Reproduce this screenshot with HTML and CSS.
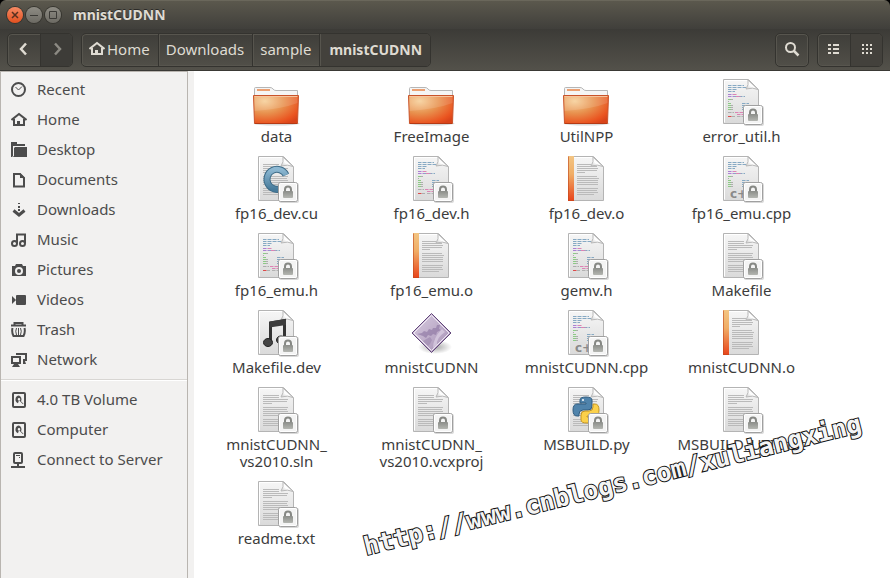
FILE: index.html
```html
<!DOCTYPE html>
<html lang="en">
<head>
    <meta charset="UTF-8">
    <meta name="viewport" content="width=device-width, initial-scale=1.0">
    <title>mnistCUDNN</title>
    <link rel="stylesheet" href="styles.css">
</head>
<body>
    <!-- Icon definitions -->
    <svg class="defs" width="0" height="0" aria-hidden="true">
        <defs>
            <linearGradient id="g-page" x1="0" y1="0" x2="0" y2="1">
                <stop offset="0" stop-color="#f6f6f6"/>
                <stop offset="1" stop-color="#dadada"/>
            </linearGradient>
            <linearGradient id="g-spine" x1="0" y1="0" x2="0" y2="1">
                <stop offset="0" stop-color="#f3c583"/>
                <stop offset="0.4" stop-color="#f0ad66"/>
                <stop offset="1" stop-color="#e8431a"/>
            </linearGradient>
            <linearGradient id="g-fold" x1="0" y1="1" x2="1" y2="0">
                <stop offset="0" stop-color="#c4c4c4"/>
                <stop offset="0.4" stop-color="#ffffff"/>
                <stop offset="1" stop-color="#e4e4e4"/>
            </linearGradient>
            <radialGradient id="g-folder" cx="0.25" cy="0.2" r="0.95">
                <stop offset="0" stop-color="#f6cf98"/>
                <stop offset="0.45" stop-color="#e8924f"/>
                <stop offset="0.85" stop-color="#ea5420"/>
                <stop offset="1" stop-color="#d9441a"/>
            </radialGradient>
            <linearGradient id="g-lock" x1="0" y1="0" x2="0" y2="1">
                <stop offset="0" stop-color="#8b8d89"/>
                <stop offset="1" stop-color="#b4b6b1"/>
            </linearGradient>
            <linearGradient id="g-diamond" x1="0" y1="0" x2="1" y2="1">
                <stop offset="0" stop-color="#d9cde0"/>
                <stop offset="1" stop-color="#a58fb5"/>
            </linearGradient>
            <linearGradient id="g-c" x1="0" y1="0" x2="0" y2="1">
                <stop offset="0" stop-color="#8db8d2"/>
                <stop offset="1" stop-color="#477b9b"/>
            </linearGradient>
            <radialGradient id="g-shadow">
                <stop offset="0" stop-color="#000" stop-opacity="0.35"/>
                <stop offset="1" stop-color="#000" stop-opacity="0"/>
            </radialGradient>
        </defs>

        <symbol id="page" viewBox="0 0 49 48">
            <path d="M6.500 1.500H31.500L41.500 11.500V45.500H6.500z" fill="url(#g-page)" stroke="#b4b4b4"/>
            <path d="M7.500 44.500V2.500H30" fill="none" stroke="#fff"/>
            <path d="M31 2L41 11.500Q36 9 29 11Q32 7 31 2z" fill="url(#g-fold)" stroke="#b8b8b8"/>
        </symbol>
        <symbol id="lock" viewBox="0 0 49 48">
            <rect x="27" y="28" width="20" height="20" rx="2" fill="#000" opacity="0.15"/>
            <rect x="26.500" y="27.500" width="19" height="19" rx="2" fill="#f4f4f4" stroke="#a0a0a0"/>
            <rect x="27.500" y="28.500" width="17" height="17" rx="1" fill="none" stroke="#fff"/>
            <path d="M33 37v-2.500a3 3 0 0 1 6 0V37" fill="none" stroke="#868884" stroke-width="2"/>
            <rect x="31" y="36" width="10" height="7" rx="1" fill="url(#g-lock)"/>
        </symbol>
        <symbol id="lines" viewBox="0 0 49 48">
            <path d="M11 9.500h16M11 11.500h16M11 13.500h25M11 15.500h24M11 17.500h9M11 21.500h25M11 23.500h24M11 25.500h25M11 27.500h24M11 29.500h21M11 33.500h25M11 35.500h24M11 37.500h25M11 39.500h20" stroke="#bababa"/>
        </symbol>
        <symbol id="code" viewBox="0 0 49 48">
            <g stroke-dasharray="3 0.500 1 0.500" fill="none">
                <path d="M11 7.500h16M11 9.500h18M11 11.500h9M11 13.500h7M17 18.500h11M25 25.500h7M25 27.500h7M25 29.500h7M25 31.500h7" stroke="#86a9c3"/>
                <path d="M11 16.500h5M11 18.500h6" stroke="#ad7fd4"/>
                <path d="M16 16.500h4M19 18.500h5M18 34.500h11M20 36.500h8" stroke="#dd83b4"/>
                <path d="M11 21.500h3M11 25.500h3M11 27.500h3M11 29.500h3M11 31.500h3" stroke="#8ccb84"/>
                <path d="M14 21.500h2M11 23.500h1M14 27.500h2M14 29.500h2M14 31.500h2M11 34.500h6M15 38.500h3" stroke="#adadad"/>
                <path d="M11 38.500h4" stroke="#dc4b4b"/>
                <path d="M20 38.500h9" stroke="#b2b2b2"/>
            </g>
        </symbol>

        <symbol id="f-folder" viewBox="0 0 49 48">
            <ellipse cx="24.500" cy="45.500" rx="23" ry="2" fill="#000" opacity="0.15"/>
            <path d="M2.500 19V10.500Q2.500 9.500 3.500 9.500H18Q20 9.500 21 11Q22 12.500 24 12.500H45.500V19z" fill="#f5f5f5" stroke="#b6b6b6"/>
            <rect x="5" y="11" width="13" height="2" fill="#eca072"/>
            <path d="M1.500 17.500H46.500L45.500 45.500H2.500z" fill="url(#g-folder)" stroke="#c9532a"/>
            <path d="M2.500 18.500H45.500V25Q30 31 2.500 33z" fill="#fff" opacity="0.13"/>
            <path d="M2.500 18.500H45.500" stroke="#f6c49c"/>
            <path d="M3 45.500H45" stroke="#b53a15"/>
        </symbol>
        <symbol id="f-header" viewBox="0 0 49 48">
            <use href="#page"/><use href="#code"/><use href="#lock"/>
        </symbol>
        <symbol id="f-text" viewBox="0 0 49 48">
            <use href="#page"/><use href="#lines"/><use href="#lock"/>
        </symbol>
        <symbol id="f-cpp" viewBox="0 0 49 48">
            <use href="#page"/><use href="#code"/>
            <path d="M11 33h17v8H11z" fill="#e0e0e0"/>
            <text x="13" y="43" class="cpp">c+</text>
            <use href="#lock"/>
        </symbol>
        <symbol id="f-cuda" viewBox="0 0 49 48">
            <use href="#page"/><use href="#lines"/>
            <path d="M34 20A10 10 0 1 0 30 33" fill="none" stroke="#3d6b87" stroke-width="7"/>
            <path d="M34 20A10 10 0 1 0 30 33" fill="none" stroke="url(#g-c)" stroke-width="5"/>
            <use href="#lock"/>
        </symbol>
        <symbol id="f-object" viewBox="0 0 49 48">
            <use href="#page"/>
            <path d="M6 1H12V46H6z" fill="url(#g-spine)"/>
            <path d="M6.500 1.500V45.500H12" fill="none" stroke="#c0481c" opacity="0.6"/>
            <path d="M15 9.500h14M15 11.500h20M15 13.500h21M15 15.500h20M15 17.500h8M15 21.500h20M15 23.500h22M15 25.500h21M15 27.500h21M15 29.500h21M15 33.500h21M15 35.500h20M15 37.500h21M15 39.500h17" stroke="#bababa"/>
        </symbol>
        <symbol id="f-audio" viewBox="0 0 49 48">
            <use href="#page"/>
            <path d="M18.500 33V14L32.500 11.500V29" fill="none" stroke="#333" stroke-width="3"/>
            <path d="M17.500 12.500L34 10V16L17.500 18.500z" fill="#3c3c3c"/>
            <ellipse cx="16" cy="33.500" rx="4.500" ry="4" fill="#444" stroke="#222"/>
            <ellipse cx="29" cy="31" rx="4.500" ry="4" fill="#444" stroke="#222"/>
            <use href="#lock"/>
        </symbol>
        <symbol id="f-exec" viewBox="0 0 49 48">
            <ellipse cx="28" cy="38" rx="17" ry="7" fill="url(#g-shadow)"/>
            <path d="M24.500 4.500L44 24L24.500 43.500L5 24z" fill="url(#g-diamond)" stroke="#62467a"/>
            <path d="M24.500 6.500L42 24L24.500 41.500L7 24z" fill="none" stroke="#efe8f3"/>
            <path d="M10 25l5-1 2-2 3 1 2-3 3 1 1-2 3 0 1-3 3 0-1 4 2 1-4 2-1 3-3-1-2 2-3-1-2 3-3-2z" fill="#8b73a0" opacity="0.6"/>
            <path d="M26 39q0-10 9-19l3 3q-9 6-8 13z" fill="#d7cbe0" opacity="0.8"/>
            <path d="M16 32l7-4 2 3-2 4-2 2z" fill="#9580a8" opacity="0.5"/>
        </symbol>
        <symbol id="f-python" viewBox="0 0 49 48">
            <use href="#page"/><use href="#lines"/>
            <path d="M18 16v-2q0-3 6-3t6 3v6q0 4-4 4h-5q-4 0-4 4v2h-2q-4 0-4-6t4-6h9v-1h-6z" fill="#4f83ab" stroke="#315d80"/>
            <path d="M31 18h2q4 0 4 6t-4 6h-8v1h6v3q0 3-6 3t-6-3v-5q0-4 4-4h4q4 0 4-4z" fill="#fbd14b" stroke="#c59520"/>
            <circle cx="21" cy="14" r="1" fill="#fff"/>
            <use href="#lock"/>
        </symbol>

        <symbol id="s-recent" viewBox="0 0 16 16">
            <circle cx="7.500" cy="7.500" r="6.500" fill="none" stroke="currentColor" stroke-width="2"/>
            <path d="M4.500 5l3 3 3.500-3.500" fill="none" stroke="currentColor" stroke-width="1"/>
        </symbol>
        <symbol id="s-home" viewBox="0 0 16 16">
            <path d="M0.500 8L8 2l7.500 6" fill="none" stroke="currentColor" stroke-width="2"/>
            <path d="M3 7v6h10V7" fill="none" stroke="currentColor" stroke-width="2"/>
            <path d="M6 9h3v5H6z" fill="currentColor"/>
        </symbol>
        <symbol id="s-desktop" viewBox="0 0 16 16">
            <path d="M0 0h6v2h8v2H2v10l-1 1H0z" fill="currentColor"/>
            <path d="M4 5h12v10H1.500L3 14V6z" fill="currentColor"/>
        </symbol>
        <symbol id="s-documents" viewBox="0 0 16 16">
            <path d="M3 2h6l4 4v8.500H3z" fill="none" stroke="currentColor" stroke-width="2"/>
            <path d="M9 1v5h5z" fill="currentColor"/>
        </symbol>
        <symbol id="s-downloads" viewBox="0 0 16 16">
            <path d="M7 1h2v1H7zM7 4h2v2H7zM7 7h2v2H7z" fill="currentColor"/>
            <path d="M2.500 8.500L8 13l5.500-4.500" fill="none" stroke="currentColor" stroke-width="3"/>
        </symbol>
        <symbol id="s-music" viewBox="0 0 16 16">
            <path d="M6 11V2.500h8V11" fill="none" stroke="currentColor" stroke-width="2"/>
            <circle cx="3.500" cy="11.500" r="2.500" fill="none" stroke="currentColor" stroke-width="2"/>
            <circle cx="11.500" cy="11.500" r="2.500" fill="none" stroke="currentColor" stroke-width="2"/>
        </symbol>
        <symbol id="s-pictures" viewBox="0 0 16 16">
            <path fill-rule="evenodd" d="M1 4h3l1-2h6l1 2h3v10H1zM8 5a4 4 0 1 0 0 8a4 4 0 1 0 0-8z" fill="currentColor"/>
            <circle cx="8" cy="9" r="2" fill="currentColor"/>
        </symbol>
        <symbol id="s-videos" viewBox="0 0 16 16">
            <path d="M1 4l4 4-4 4zM5 4q0-1 1-1h8q1 0 1 1v8q0 1-1 1H6q-1 0-1-1z" fill="currentColor"/>
        </symbol>
        <symbol id="s-trash" viewBox="0 0 16 16">
            <path d="M3.500 3V1h8v2M0 3.500h15" fill="none" stroke="currentColor" stroke-width="2"/>
            <path d="M1.500 6q-1 4 1 8h10q2-4 1-8" fill="none" stroke="currentColor" stroke-width="2"/>
            <path d="M5.500 6q-1.500 3 0 7M9.500 6q1.500 3 0 7M7.500 6v7" fill="none" stroke="currentColor"/>
        </symbol>
        <symbol id="s-network" viewBox="0 0 16 16">
            <path d="M6 3V2h9v6h-3" fill="none" stroke="currentColor" stroke-width="2"/>
            <rect x="1" y="5" width="8" height="6" fill="none" stroke="currentColor" stroke-width="2"/>
            <path d="M3 12h4l2 3H1zM12 9h2l1 3h-3z" fill="currentColor"/>
        </symbol>
        <symbol id="s-disk" viewBox="0 0 16 16">
            <rect x="2" y="1" width="12" height="14" rx="1" fill="none" stroke="currentColor" stroke-width="2"/>
            <path fill-rule="evenodd" d="M8 3.500a4 4 0 0 0-1 7.700l1-3 4 4 .5-.5-2.500-2.500a4 4 0 0 0-2-5.700zM8 6a1 1 0 1 1 0 2.500A1 1 0 0 1 8 6z" fill="currentColor"/>
        </symbol>
        <symbol id="s-server" viewBox="0 0 16 16">
            <rect x="3" y="1" width="8" height="10" rx="1" fill="none" stroke="currentColor" stroke-width="2"/>
            <path d="M5 3.500h4M8 5.500h1" stroke="currentColor"/>
            <path d="M6 11h2v3H6zM0 14h14v2H0z" fill="currentColor"/>
        </symbol>
    </svg>

    <header class="window-header">
        <!-- Title bar -->
        <div class="titlebar">
            <button class="win-button close" aria-label="Close">
                <svg width="16" height="16" viewBox="0 0 16 16"><path d="M5 5l6 6M11 5l-6 6" stroke="#57301f" stroke-width="1.500"/></svg>
            </button>
            <button class="win-button" aria-label="Minimize">
                <svg width="16" height="16" viewBox="0 0 16 16"><path d="M4 8.500h8" stroke="#3b3a36"/></svg>
            </button>
            <button class="win-button" aria-label="Maximize">
                <svg width="16" height="16" viewBox="0 0 16 16"><path d="M4.500 4.500h7v7h-7z" fill="none" stroke="#3b3a36"/></svg>
            </button>
            <h1>mnistCUDNN</h1>
        </div>

        <!-- Toolbar -->
        <div class="toolbar">
            <div class="group nav">
                <button class="tool" aria-label="Back">
                    <svg width="16" height="16" viewBox="0 0 16 16"><path d="M10 2.500L5 8l5 5.500" fill="none" stroke="#dfdbd2" stroke-width="2.500"/></svg>
                </button>
                <button class="tool pressed" aria-label="Forward" disabled>
                    <svg width="16" height="16" viewBox="0 0 16 16"><path d="M6 2.500L11 8l-5 5.500" fill="none" stroke="#8c8a83" stroke-width="2.500"/></svg>
                </button>
            </div>
            <nav class="group path" aria-label="Path">
                <button class="crumb home"><svg width="16" height="16"><use href="#s-home"/></svg>Home</button>
                <button class="crumb">Downloads</button>
                <button class="crumb">sample</button>
                <button class="crumb current">mnistCUDNN</button>
            </nav>
            <div class="group search">
                <button class="tool" aria-label="Search">
                    <svg width="16" height="16" viewBox="0 0 16 16"><circle cx="6.500" cy="6.500" r="4.500" fill="none" stroke="#dfdbd2" stroke-width="2"/><path d="M9.500 9.500l5 5" stroke="#dfdbd2" stroke-width="2.500"/></svg>
                </button>
            </div>
            <div class="group">
                <button class="tool" aria-label="List view">
                    <svg width="16" height="16" viewBox="0 0 16 16"><path d="M2 3h3v2H2zM7 3h6v2H7zM2 7h3v2H2zM7 7h6v2H7zM2 11h3v2H2zM7 11h6v2H7z" fill="#dfdbd2"/></svg>
                </button>
                <button class="tool pressed" aria-label="Icon view">
                    <svg width="16" height="16" viewBox="0 0 16 16"><path d="M3 3h2v2H3zM7 3h2v2H7zM11 3h2v2h-2zM3 7h2v2H3zM7 7h2v2H7zM11 7h2v2h-2zM3 11h2v2H3zM7 11h2v2H7zM11 11h2v2h-2z" fill="#dfdbd2"/></svg>
                </button>
            </div>
        </div>
    </header>

    <main class="content">
        <!-- Places -->
        <aside class="sidebar">
            <ul>
                <li><a href="#"><svg width="16" height="16"><use href="#s-recent"/></svg>Recent</a></li>
                <li><a href="#"><svg width="16" height="16"><use href="#s-home"/></svg>Home</a></li>
                <li><a href="#"><svg width="16" height="16"><use href="#s-desktop"/></svg>Desktop</a></li>
                <li><a href="#"><svg width="16" height="16"><use href="#s-documents"/></svg>Documents</a></li>
                <li><a href="#"><svg width="16" height="16"><use href="#s-downloads"/></svg>Downloads</a></li>
                <li><a href="#"><svg width="16" height="16"><use href="#s-music"/></svg>Music</a></li>
                <li><a href="#"><svg width="16" height="16"><use href="#s-pictures"/></svg>Pictures</a></li>
                <li><a href="#"><svg width="16" height="16"><use href="#s-videos"/></svg>Videos</a></li>
                <li><a href="#"><svg width="16" height="16"><use href="#s-trash"/></svg>Trash</a></li>
                <li><a href="#"><svg width="16" height="16"><use href="#s-network"/></svg>Network</a></li>
            </ul>
            <ul>
                <li><a href="#"><svg width="16" height="16"><use href="#s-disk"/></svg>4.0 TB Volume</a></li>
                <li><a href="#"><svg width="16" height="16"><use href="#s-disk"/></svg>Computer</a></li>
                <li><a href="#"><svg width="16" height="16"><use href="#s-server"/></svg>Connect to Server</a></li>
            </ul>
        </aside>

        <!-- Files -->
        <section class="files">
            <ul class="file-grid">
                <li><a href="#"><svg width="49" height="48"><use href="#f-folder"/></svg>data</a></li>
                <li><a href="#"><svg width="49" height="48"><use href="#f-folder"/></svg>FreeImage</a></li>
                <li><a href="#"><svg width="49" height="48"><use href="#f-folder"/></svg>UtilNPP</a></li>
                <li><a href="#"><svg width="49" height="48"><use href="#f-header"/></svg>error_util.h</a></li>
                <li><a href="#"><svg width="49" height="48"><use href="#f-cuda"/></svg>fp16_dev.cu</a></li>
                <li><a href="#"><svg width="49" height="48"><use href="#f-header"/></svg>fp16_dev.h</a></li>
                <li><a href="#"><svg width="49" height="48"><use href="#f-object"/></svg>fp16_dev.o</a></li>
                <li><a href="#"><svg width="49" height="48"><use href="#f-cpp"/></svg>fp16_emu.cpp</a></li>
                <li><a href="#"><svg width="49" height="48"><use href="#f-header"/></svg>fp16_emu.h</a></li>
                <li><a href="#"><svg width="49" height="48"><use href="#f-object"/></svg>fp16_emu.o</a></li>
                <li><a href="#"><svg width="49" height="48"><use href="#f-header"/></svg>gemv.h</a></li>
                <li><a href="#"><svg width="49" height="48"><use href="#f-text"/></svg>Makefile</a></li>
                <li><a href="#"><svg width="49" height="48"><use href="#f-audio"/></svg>Makefile.dev</a></li>
                <li><a href="#"><svg width="49" height="48"><use href="#f-exec"/></svg>mnistCUDNN</a></li>
                <li><a href="#"><svg width="49" height="48"><use href="#f-cpp"/></svg>mnistCUDNN.cpp</a></li>
                <li><a href="#"><svg width="49" height="48"><use href="#f-object"/></svg>mnistCUDNN.o</a></li>
                <li><a href="#"><svg width="49" height="48"><use href="#f-text"/></svg>mnistCUDNN_<br>vs2010.sln</a></li>
                <li><a href="#"><svg width="49" height="48"><use href="#f-text"/></svg>mnistCUDNN_<br>vs2010.vcxproj</a></li>
                <li><a href="#"><svg width="49" height="48"><use href="#f-python"/></svg>MSBUILD.py</a></li>
                <li><a href="#"><svg width="49" height="48"><use href="#f-text"/></svg>MSBUILD_UTIL.txt</a></li>
                <li><a href="#"><svg width="49" height="48"><use href="#f-text"/></svg>readme.txt</a></li>
            </ul>
            <p class="watermark">http://www.cnblogs.com/xuliangxing</p>
        </section>
    </main>
</body>
</html>
```
FILE: styles.css
```css
:root {
    --text-dark: #3c3c3c;
    --text-light: #dfdbd2;
    --sidebar-bg: #f2f1f0;
    --border-color: #b9b5b0;
    --font-primary: 'Noto Sans', 'Open Sans', sans-serif;
}

* {
    box-sizing: border-box;
}

body {
    margin: 0;
    display: flex;
    flex-direction: column;
    min-height: 100vh;
    overflow: hidden;
    font-family: var(--font-primary);
    font-size: 15px;
    color: var(--text-dark);
    background-color: #000;
}

ul {
    list-style: none;
    margin: 0;
    padding: 0;
}

a {
    color: inherit;
    text-decoration: none;
}

button {
    font-family: inherit;
    font-size: inherit;
    color: inherit;
    background: none;
    border: none;
    margin: 0;
    padding: 0;
}

svg {
    display: block;
    flex-shrink: 0;
}

.defs {
    position: absolute;
}

.cpp {
    font-family: 'DejaVu Sans', sans-serif;
    font-size: 12px;
    font-weight: bold;
    fill: #8a8a8a;
}

/* Header */
.window-header {
    color: var(--text-light);
    border-radius: 6px 6px 0 0;
    overflow: hidden;
    text-shadow: 0 -1px #2c2b28;
}

.titlebar {
    display: flex;
    align-items: center;
    gap: 3px;
    height: 29px;
    padding: 0 7px;
    background: linear-gradient(#5b584d, #403f3b);
    border-top: 1px solid #6a675b;
}

.titlebar h1 {
    margin: 0 0 0 9px;
    font-size: 14px;
    line-height: 20px;
    font-weight: bold;
}

.win-button {
    width: 16px;
    height: 16px;
    border-radius: 50%;
    background: linear-gradient(#8e8c84, #6c6a63);
    box-shadow: 0 0 0 1px #36352f;
}

.win-button.close {
    background: linear-gradient(#f58a64, #e2501f);
}

.toolbar {
    display: flex;
    align-items: center;
    gap: 8px;
    padding: 4px 7px 3px;
    background: linear-gradient(#3c3b37, #53514a);
    border-bottom: 1px solid #3a3935;
}

.group {
    display: flex;
    height: 34px;
    border: 1px solid #34332f;
    border-radius: 5px;
    overflow: hidden;
    box-shadow: inset 0 0 0 1px #57554e;
}

.group.search {
    margin-left: auto;
}

.tool {
    display: flex;
    align-items: center;
    justify-content: center;
    width: 32px;
    padding-bottom: 2px;
}

.tool.pressed {
    border-left: 1px solid #34332f;
    background-color: #43413c;
}

.nav .pressed {
    background-color: #3d3c38;
}

.crumb {
    display: flex;
    align-items: center;
    gap: 2px;
    padding: 0 8px 2px 7px;
    border-right: 1px solid #34332f;
    box-shadow: inset 1px 0 #57554e;
}

.crumb.current {
    padding-left: 9px;
    border-right: none;
    font-size: 14px;
    font-weight: bold;
    background-color: #43413c;
}

/* Content */
.content {
    display: flex;
    flex: 1;
    background-color: #fff;
}

.sidebar {
    width: 188px;
    padding-top: 3px;
    background-color: var(--sidebar-bg);
    border: 1px solid var(--border-color);
    border-bottom: none;
}

.sidebar ul + ul {
    margin-top: 4px;
    padding-top: 5px;
    border-top: 1px solid #d8d6d3;
    box-shadow: inset 0 1px #fff;
}

.sidebar a {
    display: flex;
    align-items: center;
    gap: 10px;
    height: 30px;
    padding: 0 0 2px 10px;
    color: #4c4c4c;
}

.sidebar svg {
    margin-top: 2px;
}

.files {
    flex: 1;
    position: relative;
    padding: 7px 0 0 5px;
    border-left: 6px solid var(--sidebar-bg);
}

.file-grid {
    display: grid;
    grid-template-columns: repeat(auto-fill, 155px);
    row-gap: 10px;
}

.file-grid a {
    display: block;
    text-align: center;
    line-height: 17px;
}

.file-grid svg {
    margin: 0 auto 2px;
}

.watermark {
    position: absolute;
    left: 174px;
    top: 461px;
    margin: 0;
    font-family: 'DejaVu Sans Mono', monospace;
    font-size: 25px;
    font-weight: bold;
    line-height: 30px;
    white-space: nowrap;
    color: #f4f4f4;
    -webkit-text-stroke: 2px #111;
    paint-order: stroke fill;
    transform: rotate(-14deg);
    transform-origin: left bottom;
}
```
